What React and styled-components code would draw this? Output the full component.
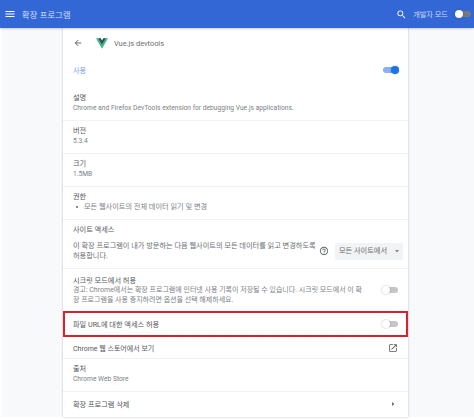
import React from "react";
import styled, { createGlobalStyle } from "styled-components";
import { MdMenu, MdSearch, MdArrowBack, MdOpenInNew, MdArrowDropDown, MdArrowRight, MdHelpOutline } from "react-icons/md";

const GlobalStyle = createGlobalStyle`
  html, body {
    margin: 0;
    padding: 0;
    background: #fff;
  }
  body {
    width: 474px;
    height: 420px;
    overflow: hidden;
    font-family: "Roboto", "Noto Sans CJK KR", sans-serif;
    font-size: 7.2px;
    color: #6a6e73;
  }
`;

const TopBar = styled.header`
  height: 28px;
  background: #3367d6;
  display: flex;
  align-items: center;
  padding: 0 3px 0 4px;
  color: #fff;
  box-shadow: 0 1px 2px rgba(0, 0, 0, 0.2);
  position: relative;
`;

const BarTitle = styled.span`
  font-size: 8.2px;
  margin-left: 6px;
  letter-spacing: 0.2px;
  color: #d5e0f8;
`;

const BarSpacer = styled.div`
  flex: 1;
`;

const DevLabel = styled.span`
  font-size: 7.2px;
  margin: 0 8px 0 6px;
  color: #c9d7f6;
`;

const Switch = styled.div`
  position: relative;
  width: 15px;
  height: 6px;
  border-radius: 3px;
  background: ${(p) => (p.$on ? "#8ab0f0" : p.$dark ? "#75787f" : "#c4c6c9")};
  &::after {
    content: "";
    position: absolute;
    top: -1px;
    left: ${(p) => (p.$on ? "8px" : "-1px")};
    width: 8px;
    height: 8px;
    border-radius: 50%;
    background: ${(p) => (p.$on ? "#1a73e8" : "#fff")};
    box-shadow: 0 0 2px rgba(0, 0, 0, 0.3);
  }
`;

const Page = styled.main`
  height: 389px;
  margin-left: 2px;
  background: #f8f9fa;
  padding-left: 61px;
`;

const Card = styled.section`
  width: 345px;
  height: 100%;
  background: #fff;
  box-shadow: 0 0 2px rgba(60, 64, 67, 0.35);
`;

const TitleRow = styled.div`
  display: flex;
  align-items: center;
  height: 30px;
  padding-left: 10px;
  font-size: 7.4px;
  color: #6a6e73;
`;

const VueLogo = styled.svg`
  width: 12px;
  height: 11px;
  margin: 0 6px 0 13px;
`;

const EnableRow = styled.div`
  display: flex;
  align-items: center;
  justify-content: space-between;
  height: 24px;
  padding: 0 10px;
  color: #7b9fe8;
`;

const Block = styled.div`
  padding: ${(p) => p.$top || 5}px 10px 0;
  height: ${(p) => p.$h || 33}px;
  box-sizing: border-box;
  line-height: 10px;
  border-top: ${(p) => (p.$line ? "1px solid #f1f2f3" : "none")};
`;

const Label = styled.div`
  color: #54575b;
`;

const Detail = styled.div`
  color: #7d8186;
  font-size: ${(p) => (p.$latin ? "6.7px" : "inherit")};
`;

const Bullet = styled.div`
  color: #7d8186;
  padding-left: 11px;
  position: relative;
  &::before {
    content: "";
    position: absolute;
    left: 3px;
    top: 4px;
    width: 2px;
    height: 2px;
    border-radius: 50%;
    background: #5f6368;
  }
`;

const Access = styled.div`
  display: flex;
  align-items: center;
  margin-top: 6px;
`;

const AccessText = styled.div`
  width: 244px;
  color: #6a6e73;
`;

const HelpIcon = styled(MdHelpOutline)`
  margin-left: 2px;
  color: #5f6368;
`;

const Select = styled.div`
  display: flex;
  align-items: center;
  justify-content: space-between;
  width: 68px;
  height: 17px;
  box-sizing: border-box;
  padding: 0 1px 0 4px;
  margin-left: auto;
  margin-right: -5px;
  background: #f1f3f4;
  border-radius: 2px;
  color: #6a6e73;
`;

const SplitRow = styled.div`
  display: flex;
  align-items: center;
  justify-content: space-between;
  box-sizing: border-box;
  height: ${(p) => p.$h}px;
  padding: 0 10px;
  border-top: ${(p) => (p.$line ? "1px solid #f1f2f3" : "none")};
  color: #54575b;
`;

const Marked = styled(SplitRow)`
  outline: 2px solid #d8232f;
  outline-offset: -2px;
`;

const ToggleText = styled.div`
  width: 294px;
  font-size: 7px;
  line-height: 10px;
  color: #7d8186;
`;

const Mixed = styled.span`
  font-size: 7px;
`;

export default function App() {
  return (
    <>
      <GlobalStyle />
      <TopBar>
        <MdMenu size={12} />
        <BarTitle>확장 프로그램</BarTitle>
        <BarSpacer />
        <MdSearch size={11} />
        <DevLabel>개발자 모드</DevLabel>
        <Switch $dark />
      </TopBar>
      <Page>
        <Card>
          <TitleRow>
            <MdArrowBack size={10} />
            <VueLogo viewBox="0 0 261 226">
              <path fill="#41b883" d="M161 0l-31 53L100 0H0l130 226L261 0z" />
              <path fill="#34495e" d="M161 0l-31 53L100 0H52l78 135L209 0z" />
            </VueLogo>
            Vue.js devtools
          </TitleRow>
          <EnableRow>
            사용
            <Switch $on />
          </EnableRow>
          <Block $h={38} $top={11}>
            <Label>설명</Label>
            <Detail $latin>Chrome and Firefox DevTools extension for debugging Vue.js applications.</Detail>
          </Block>
          <Block $line>
            <Label>버전</Label>
            <Detail $latin>5.3.4</Detail>
          </Block>
          <Block $line>
            <Label>크기</Label>
            <Detail $latin>1.5MB</Detail>
          </Block>
          <Block $line>
            <Label>권한</Label>
            <Bullet>모든 웹사이트의 전체 데이터 읽기 및 변경</Bullet>
          </Block>
          <Block $line $h={49}>
            <Label>사이트 액세스</Label>
            <Access>
              <AccessText>이 확장 프로그램이 내가 방문하는 다음 웹사이트의 모든 데이터를 읽고 변경하도록 허용합니다.</AccessText>
              <HelpIcon size={10} />
              <Select>
                모든 사이트에서
                <MdArrowDropDown size={10} />
              </Select>
            </Access>
          </Block>
          <SplitRow $line $h={43}>
            <div>
              <Label>시크릿 모드에서 허용</Label>
              <ToggleText>경고: Chrome에서는 확장 프로그램에 인터넷 사용 기록이 저장될 수 있습니다. 시크릿 모드에서 이 확장 프로그램을 사용 중지하려면 옵션을 선택 해제하세요.</ToggleText>
            </div>
            <Switch />
          </SplitRow>
          <Marked $h={26}>
            파일 URL에 대한 액세스 허용
            <Switch />
          </Marked>
          <SplitRow $h={21}>
            <Mixed>Chrome 웹 스토어에서 보기</Mixed>
            <MdOpenInNew size={10} />
          </SplitRow>
          <Block $line>
            <Label>출처</Label>
            <Detail $latin>Chrome Web Store</Detail>
          </Block>
          <SplitRow $line $h={24}>
            확장 프로그램 삭제
            <MdArrowRight size={10} />
          </SplitRow>
        </Card>
      </Page>
    </>
  );
}
